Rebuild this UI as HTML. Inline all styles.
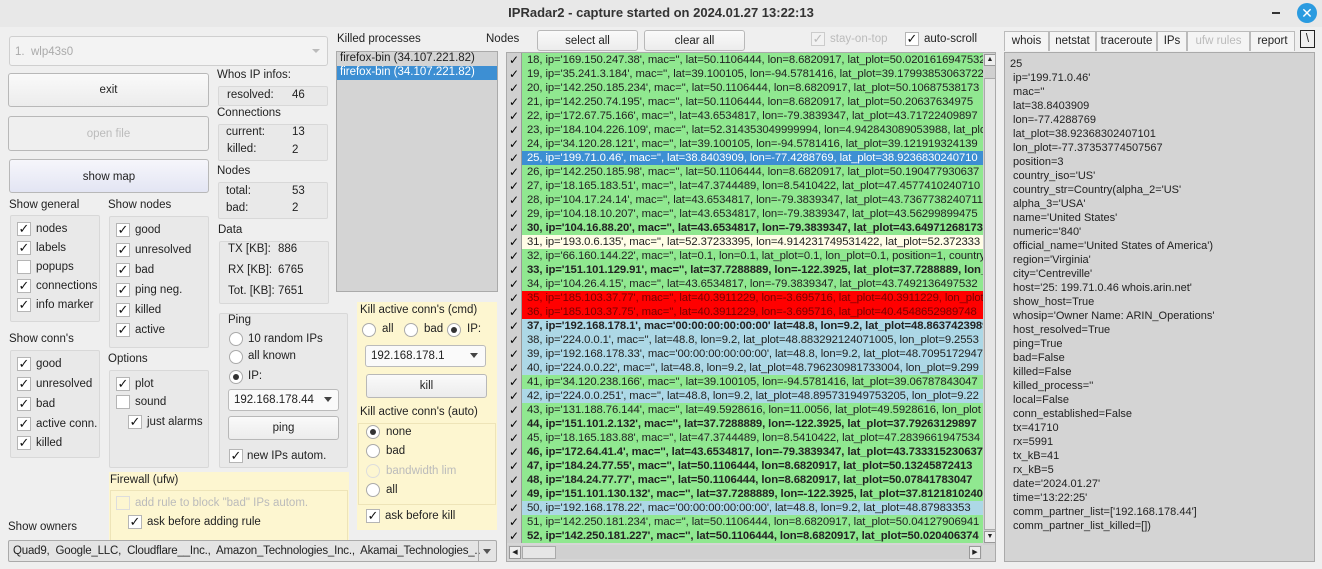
<!DOCTYPE html>
<html><head><meta charset="utf-8"><style>
*{box-sizing:border-box;margin:0;padding:0}
body{width:1322px;height:569px;background:#efefef;font-family:"Liberation Sans","DejaVu Sans",sans-serif;font-size:11.5px;color:#222;position:relative;overflow:hidden}
.a{position:absolute}
.title{left:0;top:0;width:1322px;height:27px;background:#e8e8e8;text-align:center;font-weight:bold;font-size:13px;line-height:26px;color:#333}
.btn{position:absolute;border:1px solid #b8b8b8;border-radius:3px;background:linear-gradient(#fafafa,#ececec);text-align:center;font-size:11.5px}
.box{position:absolute;border:1px solid #d8d8d8;border-radius:2px;background:#e9e9e9}
.cb{position:absolute;width:14px;height:14px;border:1px solid #b5b5b5;background:#fff;font-size:13px;line-height:12px;text-align:center;font-weight:bold;color:#111}
.rb{position:absolute;width:14px;height:14px;border:1px solid #aaa;border-radius:50%;background:#fff}
.rb.on::after{content:"";position:absolute;left:3px;top:3px;width:6px;height:6px;border-radius:50%;background:#333}
.lbl{position:absolute;white-space:nowrap}
.list{left:506px;top:52px;width:490px;height:510px;border:1px solid #aaa;background:#d6d6d6;overflow:hidden}
.row{position:absolute;left:0;width:476px;height:14px;white-space:nowrap;overflow:hidden;font-size:11.3px;line-height:14px;letter-spacing:-0.1px}
.row .c{display:inline-block;width:15px;height:14px;background:#d0d0d0;border-right:1px solid #999;text-align:center;font-weight:bold;font-size:12px;color:#000;vertical-align:top;letter-spacing:0}
.row span.t{padding-left:5px}
.g{background:#90e890}.b{background:#add8e6}.r{background:#f00;color:#700}.w{background:#fffde6}.s{background:#3d8fd3;color:#fff}
.bd{font-weight:bold}
.tab{position:absolute;top:31px;height:20px;border:1px solid #bbb;border-bottom:none;background:#f4f4f4;font-size:11.5px;line-height:19px;text-align:center}
.info{left:1004px;top:52px;width:311px;height:510px;border:1px solid #aaa;background:#d4d4d4;padding:4px 0 0 5px;font-size:11px;line-height:14px;white-space:pre}
.yel{background:#fdf6d0}
</style></head><body>
<div class="a title">IPRadar2 - capture started on 2024.01.27 13:22:13</div>
<div class="a" style="left:1272px;top:12px;width:8px;height:1.5px;background:#333"></div>
<div class="a" style="left:1297px;top:3px;width:20px;height:20px;border-radius:50%;background:#2a9be0;color:#fff;text-align:center;font-weight:bold;font-size:14px;line-height:20px">✕</div>

<!-- left -->
<div class="a" style="left:9px;top:36px;width:319px;height:30px;border:1px solid #cfcfcf;border-radius:3px;background:#f3f3f3;color:#aaa;padding:9px 0 0 5px">1.&nbsp; wlp43s0</div>
<div class="a" style="left:312px;top:49px;border:4px solid transparent;border-top:4px solid #bbb"></div>
<div class="btn" style="left:8px;top:73px;width:201px;height:34px;line-height:33px">exit</div>
<div class="btn" style="left:8px;top:116px;width:201px;height:35px;line-height:34px;color:#bbb;background:#efefef">open file</div>
<div class="btn" style="left:9px;top:159px;width:200px;height:34px;line-height:34px;background:linear-gradient(#f6f6fb,#e3e5f3)">show map</div>

<div class="lbl" style="left:217px;top:69px">Whos IP infos:</div>
<div class="box" style="left:218px;top:86px;width:110px;height:20px"></div>
<div class="lbl" style="left:227px;top:89px">resolved:</div><div class="lbl" style="left:292px;top:89px">46</div>
<div class="lbl" style="left:217px;top:107px">Connections</div>
<div class="box" style="left:218px;top:124px;width:110px;height:37px"></div>
<div class="lbl" style="left:226px;top:126px">current:</div><div class="lbl" style="left:292px;top:126px">13</div>
<div class="lbl" style="left:227px;top:143px">killed:</div><div class="lbl" style="left:292px;top:144px">2</div>
<div class="lbl" style="left:217px;top:165px">Nodes</div>
<div class="box" style="left:218px;top:182px;width:110px;height:37px"></div>
<div class="lbl" style="left:226px;top:185px">total:</div><div class="lbl" style="left:292px;top:185px">53</div>
<div class="lbl" style="left:226px;top:202px">bad:</div><div class="lbl" style="left:292px;top:202px">2</div>
<div class="lbl" style="left:218px;top:224px">Data</div>
<div class="box" style="left:219px;top:241px;width:110px;height:63px"></div>
<div class="lbl" style="left:228px;top:243px">TX [KB]:</div><div class="lbl" style="left:278px;top:243px">886</div>
<div class="lbl" style="left:228px;top:264px">RX [KB]:</div><div class="lbl" style="left:278px;top:264px">6765</div>
<div class="lbl" style="left:228px;top:285px">Tot. [KB]:</div><div class="lbl" style="left:278px;top:285px">7651</div>

<div class="lbl" style="left:9px;top:199px">Show general</div>
<div class="box" style="left:10px;top:215px;width:90px;height:107px"></div>
<div class="cb" style="left:17px;top:222px">✓</div><div class="lbl" style="left:36px;top:223px">nodes</div>
<div class="cb" style="left:17px;top:241px">✓</div><div class="lbl" style="left:36px;top:242px">labels</div>
<div class="cb" style="left:17px;top:260px"></div><div class="lbl" style="left:36px;top:261px">popups</div>
<div class="cb" style="left:17px;top:279px">✓</div><div class="lbl" style="left:36px;top:280px">connections</div>
<div class="cb" style="left:17px;top:298px">✓</div><div class="lbl" style="left:36px;top:299px">info marker</div>

<div class="lbl" style="left:108px;top:199px">Show nodes</div>
<div class="box" style="left:109px;top:216px;width:100px;height:132px"></div>
<div class="cb" style="left:116px;top:223px">✓</div><div class="lbl" style="left:135px;top:224px">good</div>
<div class="cb" style="left:116px;top:243px">✓</div><div class="lbl" style="left:135px;top:244px">unresolved</div>
<div class="cb" style="left:116px;top:263px">✓</div><div class="lbl" style="left:135px;top:264px">bad</div>
<div class="cb" style="left:116px;top:283px">✓</div><div class="lbl" style="left:135px;top:284px">ping neg.</div>
<div class="cb" style="left:116px;top:303px">✓</div><div class="lbl" style="left:135px;top:304px">killed</div>
<div class="cb" style="left:116px;top:323px">✓</div><div class="lbl" style="left:135px;top:324px">active</div>

<div class="lbl" style="left:9px;top:333px">Show conn's</div>
<div class="box" style="left:10px;top:350px;width:90px;height:108px"></div>
<div class="cb" style="left:17px;top:357px">✓</div><div class="lbl" style="left:36px;top:358px">good</div>
<div class="cb" style="left:17px;top:377px">✓</div><div class="lbl" style="left:36px;top:378px">unresolved</div>
<div class="cb" style="left:17px;top:397px">✓</div><div class="lbl" style="left:36px;top:398px">bad</div>
<div class="cb" style="left:17px;top:417px">✓</div><div class="lbl" style="left:36px;top:418px">active conn.</div>
<div class="cb" style="left:17px;top:436px">✓</div><div class="lbl" style="left:36px;top:437px">killed</div>

<div class="lbl" style="left:108px;top:353px">Options</div>
<div class="box" style="left:109px;top:370px;width:100px;height:98px"></div>
<div class="cb" style="left:116px;top:377px">✓</div><div class="lbl" style="left:135px;top:378px">plot</div>
<div class="cb" style="left:116px;top:395px"></div><div class="lbl" style="left:135px;top:396px">sound</div>
<div class="cb" style="left:128px;top:415px">✓</div><div class="lbl" style="left:147px;top:416px">just alarms</div>

<div class="box" style="left:219px;top:313px;width:129px;height:155px"></div>
<div class="lbl" style="left:228px;top:314px">Ping</div>
<div class="rb" style="left:229px;top:332px"></div><div class="lbl" style="left:248px;top:333px">10 random IPs</div>
<div class="rb" style="left:229px;top:350px"></div><div class="lbl" style="left:248px;top:350px">all known</div>
<div class="rb on" style="left:229px;top:370px"></div><div class="lbl" style="left:248px;top:370px">IP:</div>
<div class="a" style="left:228px;top:389px;width:111px;height:22px;border:1px solid #bbb;border-radius:3px;background:#fafafa;padding:4px 0 0 5px">192.168.178.44</div>
<div class="a" style="left:324px;top:397px;border:4px solid transparent;border-top:5px solid #444"></div>
<div class="btn" style="left:228px;top:416px;width:111px;height:24px;line-height:23px">ping</div>
<div class="cb" style="left:229px;top:449px">✓</div><div class="lbl" style="left:247px;top:450px">new IPs autom.</div>

<div class="a yel" style="left:109px;top:472px;width:240px;height:71px"></div>
<div class="lbl" style="left:110px;top:474px">Firewall (ufw)</div>
<div class="a" style="left:110px;top:490px;width:238px;height:52px;border:1px solid #eee4b8"></div>
<div class="cb" style="left:116px;top:496px;border-color:#ddd;background:#fdf6d0"></div><div class="lbl" style="left:135px;top:497px;color:#bbb">add rule to block "bad" IPs autom.</div>
<div class="cb" style="left:128px;top:515px">✓</div><div class="lbl" style="left:147px;top:516px">ask before adding rule</div>

<div class="lbl" style="left:8px;top:521px">Show owners</div>
<div class="a" style="left:8px;top:540px;width:489px;height:22px;border:1px solid #aaa;border-radius:2px;background:#e4e4e4;padding:4px 0 0 4px;white-space:nowrap;overflow:hidden"><span style="display:inline-block;width:468px;overflow:hidden;white-space:nowrap;letter-spacing:-0.2px">Quad9,&nbsp; Google_LLC,&nbsp; Cloudflare__Inc.,&nbsp; Amazon_Technologies_Inc.,&nbsp; Akamai_Technologies_...</span></div>
<div class="a" style="left:478px;top:541px;width:1px;height:20px;background:#aaa"></div>
<div class="a" style="left:483px;top:549px;border:4px solid transparent;border-top:5px solid #555"></div>

<!-- killed processes -->
<div class="lbl" style="left:337px;top:33px">Killed processes</div>
<div class="a" style="left:336px;top:51px;width:162px;height:241px;border:1px solid #aaa;background:#d4d4d4"></div>
<div class="lbl" style="left:340px;top:52px">firefox-bin (34.107.221.82)</div>
<div class="a" style="left:337px;top:66px;width:160px;height:14px;background:#3d8fd3"></div>
<div class="lbl" style="left:340px;top:66px;color:#fff">firefox-bin (34.107.221.82)</div>

<!-- kill cmd -->
<div class="a yel" style="left:357px;top:302px;width:140px;height:228px"></div>
<div class="lbl" style="left:360px;top:304px">Kill active conn's (cmd)</div>
<div class="rb" style="left:362px;top:323px"></div><div class="lbl" style="left:382px;top:323px">all</div>
<div class="rb" style="left:404px;top:323px"></div><div class="lbl" style="left:424px;top:323px">bad</div>
<div class="rb on" style="left:447px;top:323px"></div><div class="lbl" style="left:467px;top:323px">IP:</div>
<div class="a" style="left:365px;top:345px;width:121px;height:22px;border:1px solid #bbb;border-radius:3px;background:#fafafa;padding:4px 0 0 5px">192.168.178.1</div>
<div class="a" style="left:470px;top:353px;border:4px solid transparent;border-top:5px solid #444"></div>
<div class="btn" style="left:366px;top:374px;width:121px;height:24px;line-height:23px">kill</div>
<div class="lbl" style="left:360px;top:406px">Kill active conn's (auto)</div>
<div class="a" style="left:358px;top:423px;width:138px;height:82px;border:1px solid #eee4b8"></div>
<div class="rb on" style="left:366px;top:425px"></div><div class="lbl" style="left:386px;top:426px">none</div>
<div class="rb" style="left:366px;top:444px"></div><div class="lbl" style="left:386px;top:445px">bad</div>
<div class="rb" style="left:366px;top:464px;border-color:#ddd;background:#fdf6d0"></div><div class="lbl" style="left:386px;top:465px;color:#bbb">bandwidth lim</div>
<div class="rb" style="left:366px;top:483px"></div><div class="lbl" style="left:386px;top:484px">all</div>
<div class="cb" style="left:366px;top:509px">✓</div><div class="lbl" style="left:385px;top:510px">ask before kill</div>

<!-- nodes header -->
<div class="lbl" style="left:486px;top:33px">Nodes</div>
<div class="btn" style="left:537px;top:30px;width:101px;height:21px;line-height:20px">select all</div>
<div class="btn" style="left:644px;top:30px;width:101px;height:21px;line-height:20px">clear all</div>
<div class="cb" style="left:811px;top:32px;border-color:#ccc;color:#bbb;background:#f2f2f2">✓</div><div class="lbl" style="left:830px;top:33px;color:#bbb">stay-on-top</div>
<div class="cb" style="left:905px;top:32px">✓</div><div class="lbl" style="left:924px;top:33px">auto-scroll</div>

<div class="a list">
<div class="row g" style="top:0">
<span class="c">✓</span><span class="t">18, ip='169.150.247.38', mac='', lat=50.1106444, lon=8.6820917, lat_plot=50.02016169475323</span></div>
<div class="row g" style="top:14px"><span class="c">✓</span><span class="t">19, ip='35.241.3.184', mac='', lat=39.100105, lon=-94.5781416, lat_plot=39.17993853063722</span></div>
<div class="row g" style="top:28px"><span class="c">✓</span><span class="t">20, ip='142.250.185.234', mac='', lat=50.1106444, lon=8.6820917, lat_plot=50.10687538173</span></div>
<div class="row g" style="top:42px"><span class="c">✓</span><span class="t">21, ip='142.250.74.195', mac='', lat=50.1106444, lon=8.6820917, lat_plot=50.20637634975</span></div>
<div class="row g" style="top:56px"><span class="c">✓</span><span class="t">22, ip='172.67.75.166', mac='', lat=43.6534817, lon=-79.3839347, lat_plot=43.71722409897</span></div>
<div class="row g" style="top:70px"><span class="c">✓</span><span class="t">23, ip='184.104.226.109', mac='', lat=52.314353049999994, lon=4.942843089053988, lat_plot</span></div>
<div class="row g" style="top:84px"><span class="c">✓</span><span class="t">24, ip='34.120.28.121', mac='', lat=39.100105, lon=-94.5781416, lat_plot=39.121919324139</span></div>
<div class="row s" style="top:98px"><span class="c">✓</span><span class="t">25, ip='199.71.0.46', mac='', lat=38.8403909, lon=-77.4288769, lat_plot=38.9236830240710</span></div>
<div class="row g" style="top:112px"><span class="c">✓</span><span class="t">26, ip='142.250.185.98', mac='', lat=50.1106444, lon=8.6820917, lat_plot=50.190477930637</span></div>
<div class="row g" style="top:126px"><span class="c">✓</span><span class="t">27, ip='18.165.183.51', mac='', lat=47.3744489, lon=8.5410422, lat_plot=47.4577410240710</span></div>
<div class="row g" style="top:140px"><span class="c">✓</span><span class="t">28, ip='104.17.24.14', mac='', lat=43.6534817, lon=-79.3839347, lat_plot=43.7367738240711</span></div>
<div class="row g" style="top:154px"><span class="c">✓</span><span class="t">29, ip='104.18.10.207', mac='', lat=43.6534817, lon=-79.3839347, lat_plot=43.56299899475</span></div>
<div class="row g bd" style="top:168px"><span class="c">✓</span><span class="t">30, ip='104.16.88.20', mac='', lat=43.6534817, lon=-79.3839347, lat_plot=43.64971268173</span></div>
<div class="row w" style="top:182px"><span class="c">✓</span><span class="t">31, ip='193.0.6.135', mac='', lat=52.37233395, lon=4.914231749531422, lat_plot=52.372333</span></div>
<div class="row g" style="top:196px"><span class="c">✓</span><span class="t">32, ip='66.160.144.22', mac='', lat=0.1, lon=0.1, lat_plot=0.1, lon_plot=0.1, position=1, country</span></div>
<div class="row g bd" style="top:210px"><span class="c">✓</span><span class="t">33, ip='151.101.129.91', mac='', lat=37.7288889, lon=-122.3925, lat_plot=37.7288889, lon_</span></div>
<div class="row g" style="top:224px"><span class="c">✓</span><span class="t">34, ip='104.26.4.15', mac='', lat=43.6534817, lon=-79.3839347, lat_plot=43.7492136497532</span></div>
<div class="row r" style="top:238px"><span class="c">✓</span><span class="t">35, ip='185.103.37.77', mac='', lat=40.3911229, lon=-3.695716, lat_plot=40.3911229, lon_plot</span></div>
<div class="row r" style="top:252px"><span class="c">✓</span><span class="t">36, ip='185.103.37.75', mac='', lat=40.3911229, lon=-3.695716, lat_plot=40.4548652989748</span></div>
<div class="row b bd" style="top:266px"><span class="c">✓</span><span class="t">37, ip='192.168.178.1', mac='00:00:00:00:00:00' lat=48.8, lon=9.2, lat_plot=48.8637423989</span></div>
<div class="row b" style="top:280px"><span class="c">✓</span><span class="t">38, ip='224.0.0.1', mac='', lat=48.8, lon=9.2, lat_plot=48.883292124071005, lon_plot=9.2553</span></div>
<div class="row b" style="top:294px"><span class="c">✓</span><span class="t">39, ip='192.168.178.33', mac='00:00:00:00:00:00', lat=48.8, lon=9.2, lat_plot=48.7095172947</span></div>
<div class="row b" style="top:308px"><span class="c">✓</span><span class="t">40, ip='224.0.0.22', mac='', lat=48.8, lon=9.2, lat_plot=48.796230981733004, lon_plot=9.299</span></div>
<div class="row g" style="top:322px"><span class="c">✓</span><span class="t">41, ip='34.120.238.166', mac='', lat=39.100105, lon=-94.5781416, lat_plot=39.06787843047</span></div>
<div class="row b" style="top:336px"><span class="c">✓</span><span class="t">42, ip='224.0.0.251', mac='', lat=48.8, lon=9.2, lat_plot=48.895731949753205, lon_plot=9.22</span></div>
<div class="row g" style="top:350px"><span class="c">✓</span><span class="t">43, ip='131.188.76.144', mac='', lat=49.5928616, lon=11.0056, lat_plot=49.5928616, lon_plot</span></div>
<div class="row g bd" style="top:364px"><span class="c">✓</span><span class="t">44, ip='151.101.2.132', mac='', lat=37.7288889, lon=-122.3925, lat_plot=37.79263129897</span></div>
<div class="row g" style="top:378px"><span class="c">✓</span><span class="t">45, ip='18.165.183.88', mac='', lat=47.3744489, lon=8.5410422, lat_plot=47.2839661947534</span></div>
<div class="row g bd" style="top:392px"><span class="c">✓</span><span class="t">46, ip='172.64.41.4', mac='', lat=43.6534817, lon=-79.3839347, lat_plot=43.733315230637</span></div>
<div class="row g bd" style="top:406px"><span class="c">✓</span><span class="t">47, ip='184.24.77.55', mac='', lat=50.1106444, lon=8.6820917, lat_plot=50.13245872413</span></div>
<div class="row g bd" style="top:420px"><span class="c">✓</span><span class="t">48, ip='184.24.77.77', mac='', lat=50.1106444, lon=8.6820917, lat_plot=50.07841783047</span></div>
<div class="row g bd" style="top:434px"><span class="c">✓</span><span class="t">49, ip='151.101.130.132', mac='', lat=37.7288889, lon=-122.3925, lat_plot=37.8121810240</span></div>
<div class="row b" style="top:448px"><span class="c">✓</span><span class="t">50, ip='192.168.178.22', mac='00:00:00:00:00:00', lat=48.8, lon=9.2, lat_plot=48.87983353</span></div>
<div class="row g" style="top:462px"><span class="c">✓</span><span class="t">51, ip='142.250.181.234', mac='', lat=50.1106444, lon=8.6820917, lat_plot=50.04127906941</span></div>
<div class="row g bd" style="top:476px"><span class="c">✓</span><span class="t">52, ip='142.250.181.227', mac='', lat=50.1106444, lon=8.6820917, lat_plot=50.020406374</span></div>
<!-- vscroll -->
<div class="a" style="left:476px;top:0;width:13px;height:492px;background:#d0d0d0"></div>
<div class="a" style="left:477px;top:1px;width:12px;height:12px;border:1px solid #999;background:#eee;font-size:7px;text-align:center;line-height:10px">▲</div>
<div class="a" style="left:477px;top:25px;width:12px;height:452px;border:1px solid #aaa;background:#e6e6e6"></div>
<div class="a" style="left:477px;top:478px;width:12px;height:12px;border:1px solid #999;background:#eee;font-size:7px;text-align:center;line-height:10px">▼</div>
<!-- hscroll -->
<div class="a" style="left:1px;top:492px;width:474px;height:14px;background:#d0d0d0"></div>
<div class="a" style="left:2px;top:493px;width:12px;height:13px;border:1px solid #999;background:#eee;font-size:7px;text-align:center;line-height:11px">◀</div>
<div class="a" style="left:15px;top:493px;width:34px;height:13px;border:1px solid #aaa;background:#e6e6e6"></div>
<div class="a" style="left:462px;top:493px;width:12px;height:13px;border:1px solid #999;background:#eee;font-size:7px;text-align:center;line-height:11px">▶</div>
</div>

<!-- right tabs -->
<div class="tab" style="left:1004px;width:45px">whois</div>
<div class="tab" style="left:1049px;width:47px">netstat</div>
<div class="tab" style="left:1096px;width:61px">traceroute</div>
<div class="tab" style="left:1157px;width:30px">IPs</div>
<div class="tab" style="left:1187px;width:63px;color:#bbb">ufw rules</div>
<div class="tab" style="left:1250px;width:45px">report</div>
<div class="a" style="left:1300px;top:30px;width:15px;height:18px;border:1px solid #222;text-align:center;line-height:16px">\</div>
<div class="a info">25
 ip='199.71.0.46'
 mac=''
 lat=38.8403909
 lon=-77.4288769
 lat_plot=38.92368302407101
 lon_plot=-77.37353774507567
 position=3
 country_iso='US'
 country_str=Country(alpha_2='US'
 alpha_3='USA'
 name='United States'
 numeric='840'
 official_name='United States of America')
 region='Virginia'
 city='Centreville'
 host='25: 199.71.0.46 whois.arin.net'
 show_host=True
 whosip='Owner Name: ARIN_Operations'
 host_resolved=True
 ping=True
 bad=False
 killed=False
 killed_process=''
 local=False
 conn_established=False
 tx=41710
 rx=5991
 tx_kB=41
 rx_kB=5
 date='2024.01.27'
 time='13:22:25'
 comm_partner_list=['192.168.178.44']
 comm_partner_list_killed=[])</div>
</body></html>
